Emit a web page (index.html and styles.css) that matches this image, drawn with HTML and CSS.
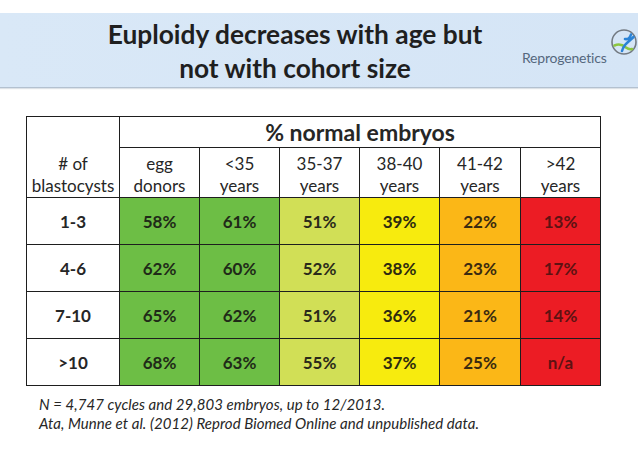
FILE: index.html
```html
<!DOCTYPE html>
<html>
<head>
<meta charset="utf-8">
<link rel="stylesheet" href="styles.css">
</head>
<body>
<div class="slide">
  <header class="banner">
    <h1 class="title">Euploidy decreases with age but<br>not with cohort size</h1>
    <div class="logo">
      <span class="logo-text">Reprogenetics</span>
      <svg class="logo-mark" width="28" height="28" viewBox="0 0 28 28">
        <circle cx="14" cy="14" r="12" fill="none" stroke="#737a82" stroke-width="1.6"/>
        <path d="M4.5 17.5 C9 15.5 13 17 16 19.5 C18 21 20 21.5 22 21" fill="none" stroke="#8cc63f" stroke-width="2.6" stroke-linecap="round"/>
        <path d="M21 6.5 C20 10 17.5 11.5 15 11 M23.5 9 C21 11.5 17.5 14 15 17 C13.5 19 12.5 21 12 23" fill="none" stroke="#2b83d6" stroke-width="2.6" stroke-linecap="round"/>
      </svg>
    </div>
  </header>

  <table class="data">
    <colgroup>
      <col class="c-first">
      <col class="c-val"><col class="c-val"><col class="c-val"><col class="c-val"><col class="c-val2"><col class="c-val">
    </colgroup>
    <tr class="r-top">
      <th class="corner" rowspan="2"># of<br>blastocysts</th>
      <th class="span-head" colspan="6">% normal embryos</th>
    </tr>
    <tr class="r-head">
      <th>egg<br>donors</th>
      <th>&lt;35<br>years</th>
      <th>35-37<br>years</th>
      <th>38-40<br>years</th>
      <th>41-42<br>years</th>
      <th>&gt;42<br>years</th>
    </tr>
    <tr>
      <td class="lbl">1-3</td>
      <td class="g">58%</td><td class="g">61%</td><td class="yg">51%</td><td class="y">39%</td><td class="o">22%</td><td class="r">13%</td>
    </tr>
    <tr>
      <td class="lbl">4-6</td>
      <td class="g">62%</td><td class="g">60%</td><td class="yg">52%</td><td class="y">38%</td><td class="o">23%</td><td class="r">17%</td>
    </tr>
    <tr>
      <td class="lbl">7-10</td>
      <td class="g">65%</td><td class="g">62%</td><td class="yg">51%</td><td class="y">36%</td><td class="o">21%</td><td class="r">14%</td>
    </tr>
    <tr>
      <td class="lbl">&gt;10</td>
      <td class="g">68%</td><td class="g">63%</td><td class="yg">55%</td><td class="y">37%</td><td class="o">25%</td><td class="r">n/a</td>
    </tr>
  </table>

  <p class="note">N = 4,747 cycles and 29,803 embryos, up to 12/2013.<br>Ata, Munne et al. (2012) Reprod Biomed Online and unpublished data.</p>
</div>
</body>
</html>
```

FILE: styles.css
```css
html, body {
  margin: 0;
  padding: 0;
  background: #ffffff;
}

.slide {
  width: 638px;
  height: 452px;
  padding-top: 13px;
  box-sizing: border-box;
  font-family: Lato, "Open Sans", sans-serif;
  color: #262626;
}

.banner {
  display: flex;
  align-items: center;
  height: 74px;
  background: linear-gradient(90deg, #d9e8f7 0%, #d5e5f6 100%);
  border-bottom: 1px solid #b3c1d0;
  box-shadow: 0 1px 1px rgba(120, 140, 160, 0.25);
}

.title {
  flex: none;
  margin: 0 0 0 67px;
  width: 456px;
  text-align: center;
  font-size: 26.3px;
  line-height: 34px;
  font-weight: 700;
  color: #1f1f1f;
  padding-top: 1px;
  white-space: nowrap;
}

.logo {
  flex: none;
  position: relative;
  margin-left: auto;
  width: 115px;
  height: 40px;
}

.logo-text {
  position: absolute;
  left: -1px;
  top: 19px;
  font-size: 14px;
  letter-spacing: -0.2px;
  color: #55687e;
}

.logo-mark {
  position: absolute;
  left: 87px;
  top: -2px;
}

.data {
  margin: 28px 0 0 26px;
  border-collapse: collapse;
  table-layout: fixed;
  width: 575px;
}

.c-first { width: 93px; }
.c-val { width: 80px; }
.c-val2 { width: 81px; }

.data th,
.data td {
  border: 1px solid #1e1e1e;
  text-align: center;
  padding: 0;
}

.data th {
  font-weight: 400;
  font-size: 17px;
  line-height: 22px;
  vertical-align: top;
  padding-top: 5px;
}

.data .corner {
  padding-top: 36px;
}

.r-top { height: 31px; }
.r-head { height: 47px; }

.data .span-head {
  font-size: 23px;
  font-weight: 700;
  line-height: 28px;
  vertical-align: middle;
  padding-top: 0;
}

.data td {
  height: 46px;
  font-size: 17px;
  font-weight: 700;
}

.lbl { background: #ffffff; }
.g { background: #6dbe45; color: #1f2a18; }
.yg { background: #d1df56; color: #2a2a1a; }
.y { background: #f7eb0e; color: #2d2a10; }
.o { background: #fbb717; color: #3a2a10; }
.r { background: #ec1c24; color: #5e1212; }

.note {
  margin: 9px 0 0 39px;
  font-size: 15px;
  letter-spacing: 0.05px;
  line-height: 19px;
  font-style: italic;
  color: #262626;
}
```
